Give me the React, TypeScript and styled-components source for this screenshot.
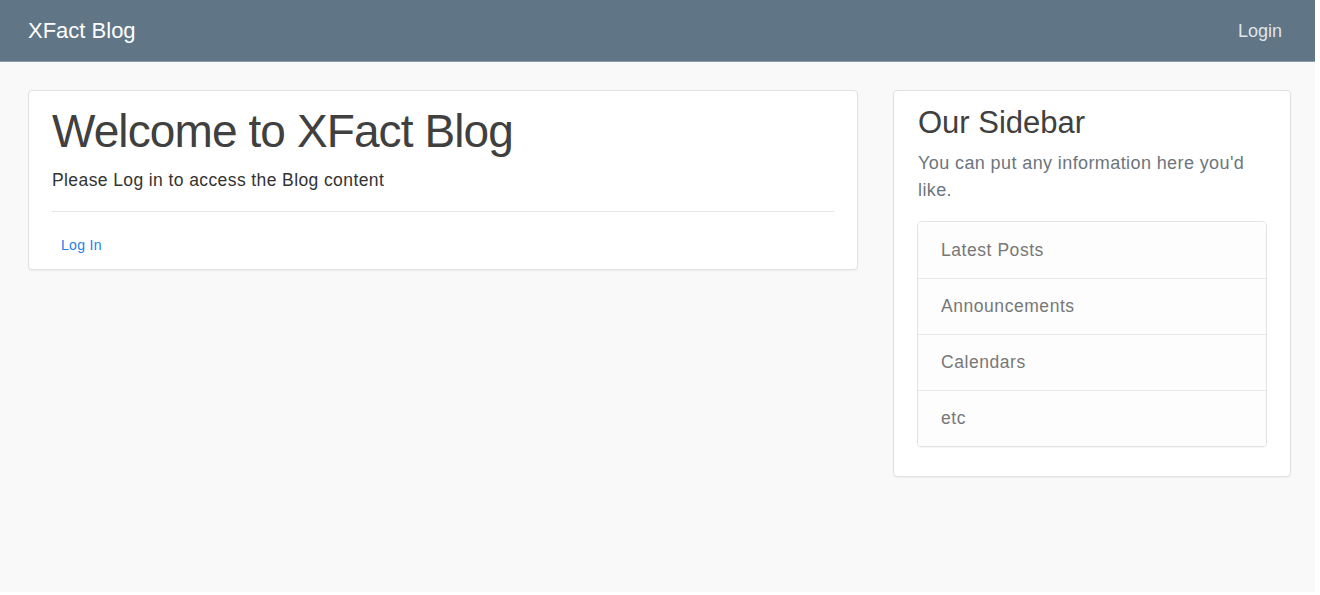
import React from "react";
import styled, { createGlobalStyle } from "styled-components";

const Global = createGlobalStyle`
  html, body { margin: 0; padding: 0; background: #ffffff; }
  body { font-family: "Liberation Sans", Arial, Helvetica, sans-serif; -webkit-font-smoothing: antialiased; }
  * { box-sizing: border-box; }
`;

const Page = styled.div`
  width: 1315px;
  height: 592px;
  background: #f9f9f9;
  display: flex;
  flex-direction: column;
`;

const NavBar = styled.nav`
  height: 62px;
  background: #607687;
  border-bottom: 1px solid #8a9aa7;
  display: flex;
  align-items: center;
  justify-content: space-between;
  padding: 0 33px 0 28px;
`;

const Brand = styled.a`
  color: #ffffff;
  font-size: 22px;
  text-decoration: none;
  line-height: 1;
`;

const NavLink = styled.a`
  color: rgba(255, 255, 255, 0.82);
  font-size: 18px;
  text-decoration: none;
  line-height: 1;
`;

const Main = styled.main`
  display: flex;
  align-items: flex-start;
  gap: 35px;
  padding: 28px 0 0 28px;
`;

const Card = styled.section<{ $width: number }>`
  width: ${(p) => p.$width}px;
  background: #ffffff;
  border: 1px solid #e2e2e2;
  border-radius: 4px;
  box-shadow: 0 1px 2px rgba(0, 0, 0, 0.05);
  padding: 0 23px 0 23px;
`;

const Title = styled.h1`
  margin: 13px 0 0;
  font-size: 46px;
  font-weight: 400;
  letter-spacing: -0.9px;
  color: #404040;
  line-height: 1.2;
`;

const Lead = styled.p`
  margin: 8px 0 0;
  font-size: 17.5px;
  letter-spacing: 0.4px;
  color: #333333;
  line-height: 1.5;
`;

const Divider = styled.hr`
  border: 0;
  border-top: 1px solid #e6e6e6;
  margin: 18px 0 0;
`;

const Footer = styled.div`
  padding: 24px 9px 15px;
`;

const TextLink = styled.a`
  color: #1a7ff0;
  font-size: 14px;
  letter-spacing: 0.3px;
  text-decoration: none;
  line-height: 1.2;
`;

const SideTitle = styled.h2`
  margin: 13px 0 0 1px;
  font-size: 31px;
  font-weight: 400;
  color: #404040;
  line-height: 1.2;
`;

const SideText = styled.p`
  margin: 9px 0 0 1px;
  font-size: 18px;
  letter-spacing: 0.4px;
  color: #6c757d;
  line-height: 27px;
`;

const List = styled.ul`
  list-style: none;
  margin: 17px 0 29px;
  padding: 0;
  border: 1px solid #e3e3e3;
  border-radius: 4px;
  overflow: hidden;
  box-shadow: 0 1px 1px rgba(0, 0, 0, 0.04);
`;

const Item = styled.li`
  height: 56px;
  display: flex;
  align-items: center;
  padding: 0 23px;
  background: #fdfdfd;
  color: #777777;
  font-size: 17.5px;
  letter-spacing: 0.55px;
  & + & { border-top: 1px solid #e6e6e6; }
`;

export default function App() {
  const items = ["Latest Posts", "Announcements", "Calendars", "etc"];
  return (
    <>
      <Global />
      <Page>
        <NavBar>
          <Brand href="#">XFact Blog</Brand>
          <NavLink href="#">Login</NavLink>
        </NavBar>
        <Main>
          <Card $width={830}>
            <Title>Welcome to XFact Blog</Title>
            <Lead>Please Log in to access the Blog content</Lead>
            <Divider />
            <Footer>
              <TextLink href="#">Log In</TextLink>
            </Footer>
          </Card>
          <Card $width={398}>
            <SideTitle>Our Sidebar</SideTitle>
            <SideText>You can put any information here you'd like.</SideText>
            <List>
              {items.map((t) => (
                <Item key={t}>{t}</Item>
              ))}
            </List>
          </Card>
        </Main>
      </Page>
    </>
  );
}
